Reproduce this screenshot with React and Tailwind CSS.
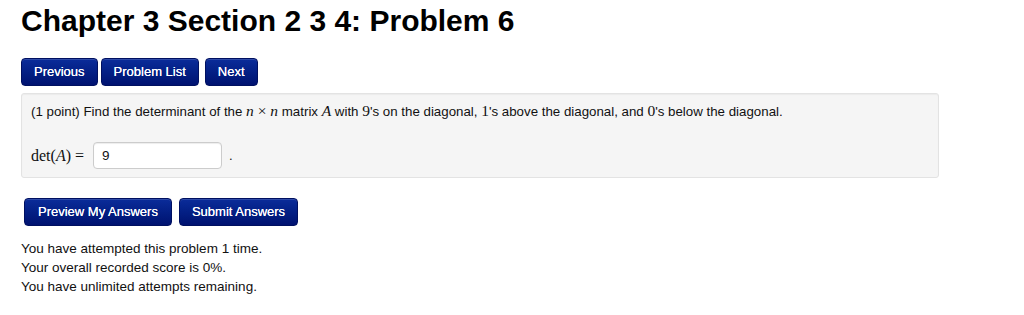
import React from "react";

const btn =
  "h-[28px] px-[12px] rounded-[4px] border border-[#001060] bg-gradient-to-b from-[#0b2c9a] to-[#001270] text-white text-[13px] leading-[26px] font-['Liberation_Sans',Arial,sans-serif] shadow-[inset_0_1px_0_rgba(255,255,255,0.15)] [text-shadow:0_0_0.4px_#fff]";

function M({ children }) {
  return (
    <span className="font-['Liberation_Serif','Times_New_Roman',serif] text-[15.5px] italic">
      {children}
    </span>
  );
}
function R({ children }) {
  return (
    <span className="font-['Liberation_Serif','Times_New_Roman',serif] text-[15.5px]">
      {children}
    </span>
  );
}

export default function App() {
  return (
    <div className="w-[1024px] h-[315px] bg-white pl-[21px] font-['Liberation_Sans',Arial,sans-serif] text-[#111]">
      <h1 className="mt-[3px] text-[30px] leading-[36px] font-bold text-black">
        Chapter 3 Section 2 3 4: Problem 6
      </h1>
      <div className="mt-[19px] flex">
        <button className={btn}>Previous</button>
        <button className={btn + " ml-[3px]"}>Problem List</button>
        <button className={btn + " ml-[6px]"}>Next</button>
      </div>
      <div className="mt-[7px] w-[918px] rounded-[3px] border border-[#e3e3e3] bg-[#f5f5f5] px-[9px] pt-[8px] pb-[8px] shadow-[inset_0_1px_1px_rgba(0,0,0,0.04)]">
        <div className="text-[13.3px] leading-[18px]">
          (1 point) Find the determinant of the <M>n</M>
          <R> × </R>
          <M>n</M> matrix <M>A</M> with <R>9</R>'s on the diagonal, <R>1</R>'s above the diagonal, and <R>0</R>'s below the diagonal.
        </div>
        <div className="mt-[21px] flex items-center h-[27px]">
          <span className="font-['Liberation_Serif','Times_New_Roman',serif] text-[16px]">
            det(<span className="italic">A</span>) =
          </span>
          <div className="ml-[9px] w-[129px] h-[27px] rounded-[4px] border border-[#cccccc] bg-white pl-[8px] text-[13.5px] leading-[25px] shadow-[inset_0_1px_1px_rgba(0,0,0,0.075)]">
            9
          </div>
          <span className="ml-[7px] text-[13px]">.</span>
        </div>
      </div>
      <div className="mt-[20px] ml-[3px] flex">
        <button className={btn + " px-[13px]"}>Preview My Answers</button>
        <button className={btn + " ml-[7px]"}>Submit Answers</button>
      </div>
      <div className="mt-[13px] text-[13.5px] leading-[19px]">
        <div>You have attempted this problem 1 time.</div>
        <div>Your overall recorded score is 0%.</div>
        <div>You have unlimited attempts remaining.</div>
      </div>
    </div>
  );
}
